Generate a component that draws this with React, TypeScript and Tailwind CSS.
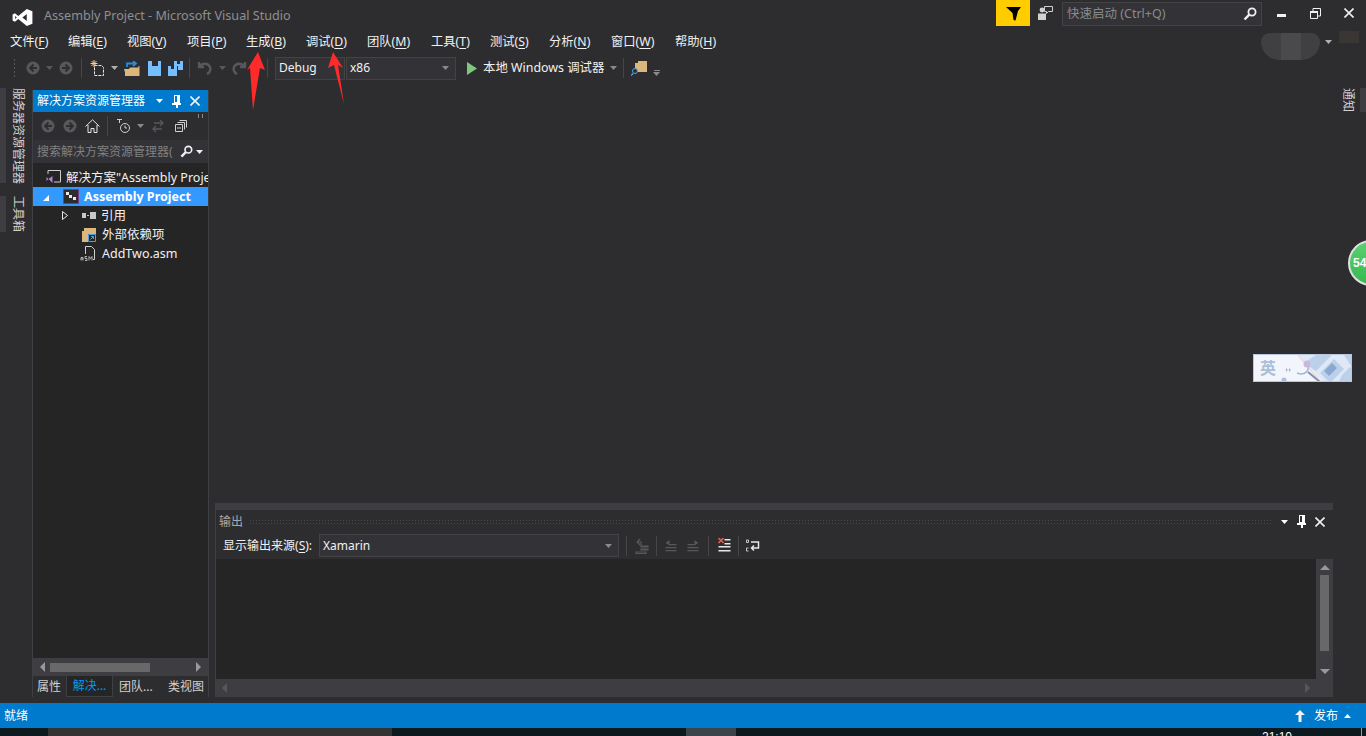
import { ReactNode } from "react";

const font = { cjk: "font-['Noto_Sans','Noto_Sans_CJK_SC',sans-serif]" };

const menus = [
  ["文件", "F", "w-[58px]"],
  ["编辑", "E", "w-[59px]"],
  ["视图", "V", "w-[60px]"],
  ["项目", "P", "w-[59px]"],
  ["生成", "B", "w-[60px]"],
  ["调试", "D", "w-[61px]"],
  ["团队", "M", "w-[64px]"],
  ["工具", "T", "w-[59px]"],
  ["测试", "S", "w-[59px]"],
  ["分析", "N", "w-[62px]"],
  ["窗口", "W", "w-[64px]"],
  ["帮助", "H", "w-[50px]"],
];

function Caret({ className = "" }: { className?: string }) {
  return (
    <svg width="7" height="4" viewBox="0 0 7 4" className={`shrink-0 ${className}`}>
      <path d="M0 0h7L3.5 4z" fill="currentColor" />
    </svg>
  );
}

function Sep({ className = "" }: { className?: string }) {
  return <div className={`w-px h-[20px] bg-[#46464a] shrink-0 ${className}`} />;
}

function CircleArrow({ dir }: { dir: "l" | "r" }) {
  return (
    <svg width="14" height="14" viewBox="0 0 14 14" className="text-[#58585c]">
      <circle cx="7" cy="7" r="6.5" fill="currentColor" />
      <path d={dir === "l" ? "M7.5 3.5 4 7l3.5 3.5M4.5 7H11" : "M6.5 3.5 10 7l-3.5 3.5M9.5 7H3"} stroke="#2d2d30" strokeWidth="1.8" fill="none" />
    </svg>
  );
}

function Pin({ color = "#fff" }: { color?: string }) {
  return (
    <svg width="9" height="13" viewBox="0 0 9 13">
      <path d="M2 .5h5v7H2zM0 8h9v1H0zM4 9h1v4H4zM5 1h1v6H5z" fill="none" stroke={color} strokeWidth="1" shapeRendering="crispEdges" />
    </svg>
  );
}

function CloseX({ size = 10 }: { size?: number }) {
  return (
    <svg width={size} height={size} viewBox="0 0 10 10">
      <path d="M.5.5l9 9M9.5.5l-9 9" stroke="#f1f1f1" strokeWidth="1.6" />
    </svg>
  );
}

function Underlined({ label, k }: { label: string; k: string }) {
  return (
    <>
      {label}(<span className="underline underline-offset-2">{k}</span>)
    </>
  );
}

function TitleBar() {
  return (
    <div className="h-[30px] flex items-start shrink-0">
      <svg width="21" height="17" viewBox="0 0 21 18" className="ml-[12px] mt-[9px]">
        <path d="M15 0l6 2.5v13L15 18 6 10.5 2.5 13.5 0 12.3V5.7l2.5-1.2L6 7.5zM15 5.2 10.4 9l4.6 3.8zM2.700 7.3v3.4L4.500 9z" fill="#fff" fillRule="evenodd" />
      </svg>
      <span className={`ml-[11px] mt-[7px] text-[12.6px] leading-[18px] text-[#8f8f91] ${font.cjk}`}>Assembly Project - Microsoft Visual Studio</span>
      <div className="ml-auto flex items-start">
        <div className="w-[34px] h-[26px] bg-[#ffcc00] flex items-center justify-center">
          <svg width="15" height="15" viewBox="0 0 15 15">
            <path d="M0 1h15l-3 4-2.500 9.500L7.500 14 6.500 7z" fill="#000" />
          </svg>
        </div>
        <svg width="15" height="14" viewBox="0 0 15 14" className="ml-[8px] mt-[6px]">
          <circle cx="4" cy="4" r="2.4" fill="#d0d0d0" />
          <path d="M0 7.5h8V14H0z" fill="#d0d0d0" />
          <path d="M6.5.5h8v5h-4l-2 2v-2h-2z" fill="none" stroke="#d0d0d0" />
        </svg>
        <div className="ml-[9px] mt-[2px] w-[200px] h-[24px] bg-[#333337] border border-[#434346] flex items-center pl-[4px] pr-[4px]">
          <span className={`pt-px text-[12.500px] text-[#8a8a8c] ${font.cjk}`}>快速启动 (Ctrl+Q)</span>
          <svg width="14" height="14" viewBox="0 0 14 14" className="ml-auto">
            <circle cx="9" cy="5" r="3.6" fill="none" stroke="#f1f1f1" strokeWidth="1.8" />
            <path d="M6.3 7.7 1.5 12.5" stroke="#f1f1f1" strokeWidth="2.4" />
          </svg>
        </div>
        <div className="w-[34px] ml-[2px] h-[26px] flex items-center justify-center">
          <div className="w-[9px] h-[3px] bg-[#f1f1f1] mt-[4px]" />
        </div>
        <div className="w-[34px] h-[26px] flex items-center justify-center">
          <svg width="11" height="11" viewBox="0 0 11 11">
            <path d="M.5 3.5h7v7h-7zM3 3V.5h7.5V8H8" fill="none" stroke="#f1f1f1" />
            <path d="M0 3h8v2H0z" fill="#f1f1f1" />
          </svg>
        </div>
        <div className="w-[34px] h-[26px] flex items-center justify-center">
          <CloseX />
        </div>
      </div>
    </div>
  );
}

function MenuBar() {
  return (
    <div className="h-[24px] flex items-center shrink-0 relative">
      <div className="flex pl-[10px]">
        {menus.map(([label, k, width]) => (
          <span key={k} className={`${width} whitespace-nowrap text-[12.300px] leading-[22px] text-[#f1f1f1] ${font.cjk}`}>
            <Underlined label={label} k={k} />
          </span>
        ))}
      </div>
      <div className="absolute left-[1261px] top-[3px] w-[59px] h-[27px] rounded-b-[30px] rounded-t-[14px] bg-[#404042] flex justify-center">
        <div className="w-[20px] h-full bg-[#4a4a4c]" />
      </div>
      <Caret className="absolute left-[1325px] top-[10px] text-[#b0b0b0]" />
      <div className="absolute left-[1339px] top-[1px] w-[20px] h-[12px] bg-[#3a3634]" />
    </div>
  );
}

function DropBox({ label, width, caret = true }: { label: string; width: string; caret?: boolean }) {
  return (
    <div className={`${width} h-[23px] bg-[#333337] border border-[#434346] flex items-center pl-[3px] pr-[6px]`}>
      <span className={`text-[12px] text-[#f1f1f1] ${font.cjk}`}>{label}</span>
      {caret && <Caret className="ml-auto text-[#8a8a8c]" />}
    </div>
  );
}

function Toolbar() {
  return (
    <div className="h-[28px] flex items-center shrink-0">
      <div className="ml-[13px] w-[3px] h-[20px] [background-image:radial-gradient(#55555a_1px,transparent_1px)] [background-size:3px_4px]" />
      <div className="ml-[10px]">
        <CircleArrow dir="l" />
      </div>
      <Caret className="ml-[6px] text-[#58585c]" />
      <div className="ml-[6px]">
        <CircleArrow dir="r" />
      </div>
      <Sep className="ml-[8px]" />
      <svg width="15" height="16" viewBox="0 0 15 16" className="ml-[8px]">
        <path d="M4.5 5.500h7l2 2v8h-9z" fill="none" stroke="#e8e8e8" strokeDasharray="3 1" />
        <path d="M4 0v7M.5 3.500h7M1.500 1l5 5M6.500 1l-5 5" stroke="#f0d090" />
      </svg>
      <Caret className="ml-[6px] text-[#b0b0b0]" />
      <svg width="16" height="15" viewBox="0 0 16 15" className="ml-[6px]">
        <path d="M0 8h5l1-1.500h9V15H2z" fill="#dcb67a" />
        <path d="M0 8h1v7h1V8zM14.500 5h1v10h-1z" fill="#dcb67a" />
        <path d="M3 6V2.500h8M9 0l3 2.500-3 2.500" stroke="#1f8fe0" strokeWidth="1.8" fill="none" />
      </svg>
      <svg width="13" height="15" viewBox="0 0 13 15" className="ml-[8px]">
        <path d="M0 0h13v15H0z" fill="#75beff" />
        <path d="M4 0h6v5H4z" fill="#2d2d30" />
      </svg>
      <svg width="15" height="15" viewBox="0 0 15 15" className="ml-[7px]">
        <path d="M6 0h9v9h-5V5H6z" fill="#75beff" />
        <path d="M9 0h3v3H9z" fill="#2d2d30" />
        <path d="M0 5h9v10H0z" fill="#75beff" />
        <path d="M3 5h3v3H3z" fill="#2d2d30" />
      </svg>
      <Sep className="ml-[6px]" />
      <svg width="15" height="14" viewBox="0 0 15 14" className="ml-[7px]">
        <path d="M2 1v5h5M2.5 5.5C5 2 11 1.500 13 6c1 3-.5 6-3 7" fill="none" stroke="#58585c" strokeWidth="2.4" />
      </svg>
      <Caret className="ml-[7px] text-[#58585c]" />
      <svg width="15" height="14" viewBox="0 0 15 14" className="ml-[6px]">
        <path d="M13 1v5H8M12.500 5.500C10 2 4 1.500 2 6c-1 3 .5 6 3 7" fill="none" stroke="#58585c" strokeWidth="2.4" />
      </svg>
      <Sep className="ml-[20px]" />
      <div className="ml-[7px]">
        <DropBox label="Debug" width="w-[70px]" caret={false} />
      </div>
      <div className="ml-px">
        <DropBox label="x86" width="w-[110px]" />
      </div>
      <svg width="10" height="13" viewBox="0 0 10 13" className="ml-[11px]">
        <path d="M0 0l10 6.500L0 13z" fill="#7fc77f" />
      </svg>
      <span className={`ml-[6px] whitespace-nowrap text-[12.400px] text-[#f1f1f1] ${font.cjk}`}>本地 Windows 调试器</span>
      <Caret className="ml-[6px] text-[#8a8a8c]" />
      <Sep className="ml-[6px]" />
      <svg width="16" height="15" viewBox="0 0 16 15" className="ml-[7px]">
        <path d="M4 2h3V0h9v11H4z" fill="#dcb67a" />
        <circle cx="4" cy="10" r="2.5" fill="#2d2d30" stroke="#4aa3e8" />
        <path d="M2 12.500 0 14.500" stroke="#4aa3e8" strokeWidth="1.500" />
      </svg>
      <div className="ml-[6px] mt-[10px] flex flex-col items-center gap-[1px] text-[#8a8a8c]">
        <div className="w-[6px] h-px bg-[#8a8a8c]" />
        <Caret />
      </div>
    </div>
  );
}

function TreeRow({ pad, icon, text, selected, arrow, gap = "ml-[5px]" }: { pad: string; icon: ReactNode; text: string; selected?: boolean; arrow?: ReactNode; gap?: string }) {
  return (
    <div className={`h-[19px] flex items-center relative ${pad} ${selected ? "bg-[#3399ff]" : ""}`}>
      {arrow}
      <div className="shrink-0 flex">{icon}</div>
      <span className={`${gap} pt-[2px] whitespace-nowrap text-[12.500px] ${selected ? "font-bold text-white" : "text-[#f1f1f1]"} ${font.cjk}`}>{text}</span>
    </div>
  );
}

function SolutionExplorer() {
  return (
    <div className="mt-[8px] mb-[6px] w-[177px] flex flex-col border-x border-[#3f3f46] shrink-0">
      <div className="h-[22px] bg-[#007acc] flex items-center pl-[4px] shrink-0">
        <span className={`text-[12px] text-white ${font.cjk}`}>解决方案资源管理器</span>
        <Caret className="ml-auto text-white" />
        <div className="ml-[9px]">
          <Pin />
        </div>
        <div className="ml-[9px] mr-[8px]">
          <CloseX />
        </div>
      </div>
      <div className="h-[28px] bg-[#2d2d30] flex items-center pl-[8px] relative shrink-0">
        <CircleArrow dir="l" />
        <div className="ml-[8px]">
          <CircleArrow dir="r" />
        </div>
        <svg width="15" height="14" viewBox="0 0 15 14" className="ml-[8px]">
          <path d="M.5 7.500 7.500.8l7 6.700M3 6v7.500h3v-4h3v4h3V6" fill="none" stroke="#e8e8e8" />
        </svg>
        <Sep className="ml-[7px]" />
        <svg width="14" height="14" viewBox="0 0 14 14" className="ml-[9px]">
          <circle cx="8" cy="9" r="4.500" fill="none" stroke="#d0d0d0" />
          <path d="M8 6.500V9h2M0 .5h5M2.500 .5V4" fill="none" stroke="#d0d0d0" />
        </svg>
        <Caret className="ml-[6px] text-[#8a8a8c]" />
        <svg width="12" height="12" viewBox="0 0 12 12" className="ml-[8px]">
          <path d="M2 3h9M8 0l3 3-3 3M10 9H1M4 6 1 9l3 3" fill="none" stroke="#58585c" strokeWidth="1.300" />
        </svg>
        <svg width="12" height="12" viewBox="0 0 12 12" className="ml-[11px]">
          <path d="M.5 4.500h7v7h-7zM2.500 2.500h7v7M4.500.5h7v7M2 8h4" fill="none" stroke="#d0d0d0" />
        </svg>
        <div className="absolute right-[5px] top-[2px] w-[5px] h-[4px] border-x border-[#8a8a8c]" />
      </div>
      <div className="h-[23px] bg-[#333337] flex items-center pl-[4px] shrink-0">
        <span className={`w-[137px] overflow-hidden whitespace-nowrap text-[12px] text-[#808082] ${font.cjk}`}>搜索解决方案资源管理器(</span>
        <svg width="13" height="13" viewBox="0 0 14 14" className="ml-[6px]">
          <circle cx="9" cy="5" r="3.600" fill="none" stroke="#f1f1f1" strokeWidth="1.800" />
          <path d="M6.300 7.700 1.500 12.500" stroke="#f1f1f1" strokeWidth="2.400" />
        </svg>
        <Caret className="ml-[3px] text-[#f1f1f1]" />
      </div>
      <div className="flex-1 bg-[#252526] pt-[5px] overflow-hidden">
        <TreeRow
          pad="pl-[13px]"
          text={'解决方案"Assembly Project"'}
          icon={
            <svg width="15" height="15" viewBox="0 0 15 15">
              <path d="M2 4V.5h12.500V12H8" fill="none" stroke="#d0d0d0" />
              <path d="M.5 7l2 2-2 2zM2.500 9l4-3v7z" fill="#b180d7" />
            </svg>
          }
        />
        <TreeRow
          pad="pl-[30px]"
          selected
          text="Assembly Project"
          arrow={<div className="absolute left-[10px] top-[8px] w-0 h-0 border-l-[6px] border-l-transparent border-b-[6px] border-b-white" />}
          icon={
            <svg width="16" height="15" viewBox="0 0 16 15">
              <path d="M.5.5h15v14H.5z" fill="#2d2d30" stroke="#7a3a8a" />
              <path d="M3 3h3v3H3zM6 6h3v3H6zM10 8h3v3h-3z" fill="#e8e8e8" />
            </svg>
          }
        />
        <TreeRow
          pad="pl-[49px]"
          gap="ml-[5px]"
          text="引用"
          arrow={
            <svg width="6" height="9" viewBox="0 0 6 9" className="absolute left-[29px] top-[5px]">
              <path d="M.5.5 5.500 4.500.5 8.500z" fill="none" stroke="#e8e8e8" />
            </svg>
          }
          icon={
            <svg width="14" height="7" viewBox="0 0 14 7">
              <path d="M0 1h4v5H0zM5 3h2v1H5z" fill="#c8c8c8" />
              <path d="M8 0h6v7H8z" fill="#c8c8c8" />
            </svg>
          }
        />
        <TreeRow
          pad="pl-[49px]"
          gap="ml-[6px]"
          text="外部依赖项"
          icon={
            <svg width="14" height="14" viewBox="0 0 14 14">
              <path d="M0 3h2V0h12v6H6v8H0z" fill="#dcb67a" />
              <path d="M6.500 6.500h7v7h-7z" fill="#252526" stroke="#4aa3e8" />
              <path d="M8.500 11.500l3-3M9 8.500h2.500V11" stroke="#4aa3e8" fill="none" />
            </svg>
          }
        />
        <TreeRow
          pad="pl-[47px]"
          gap="ml-[6px]"
          text="AddTwo.asm"
          icon={
            <svg width="16" height="15" viewBox="0 0 16 15">
              <path d="M5.500 8V.5h6l3 3v10H13" fill="none" stroke="#d0d0d0" />
              <path d="M0 10h12v5H0z" fill="#252526" />
              <path d="M1 14.500v-3h2v3M1 13h2M7 10.500H5v2h2v2H5M9 14.500v-4l1.500 2 1.500-2v4" fill="none" stroke="#d0d0d0" strokeWidth=".8" />
            </svg>
          }
        />
      </div>
      <div className="h-[18px] bg-[#3e3e42] flex items-center px-[7px] shrink-0">
        <div className="w-0 h-0 border-y-[5px] border-y-transparent border-r-[5px] border-r-[#999]" />
        <div className="ml-[5px] w-[100px] h-[9px] bg-[#686868]" />
        <div className="ml-auto w-0 h-0 border-y-[5px] border-y-transparent border-l-[5px] border-l-[#999]" />
      </div>
      <div className="h-[21px] bg-[#2d2d30] flex items-center shrink-0">
        <span className={`ml-[4px] text-[12px] text-[#d0d0d0] ${font.cjk}`}>属性</span>
        <div className="ml-[5px] w-[47px] h-[21px] bg-[#252526] border border-[#3f3f46] border-t-0 flex items-center justify-center">
          <span className={`text-[12px] text-[#0097fb] ${font.cjk}`}>解决...</span>
        </div>
        <span className={`ml-[6px] text-[12px] text-[#d0d0d0] ${font.cjk}`}>团队...</span>
        <span className={`ml-auto mr-[4px] text-[12px] text-[#d0d0d0] ${font.cjk}`}>类视图</span>
      </div>
    </div>
  );
}

function OutputPanel() {
  return (
    <div className="h-[194px] ml-[6px] flex flex-col border-l border-[#3f3f46] shrink-0">
      <div className="h-[7px] bg-[#3e3e42] shrink-0" />
      <div className="h-[23px] flex items-center pl-[3px] shrink-0">
        <span className={`text-[12px] text-[#a8a8aa] ${font.cjk}`}>输出</span>
        <div className="ml-[6px] flex-1 h-[5px] [background-image:radial-gradient(#48484c_1px,transparent_1px)] [background-size:3px_3px]" />
        <Caret className="ml-[10px] text-white" />
        <div className="ml-[9px]">
          <Pin />
        </div>
        <div className="ml-[9px] mr-[8px]">
          <CloseX />
        </div>
      </div>
      <div className="h-[25px] flex items-center pl-[7px] shrink-0">
        <span className={`text-[12px] text-[#f1f1f1] ${font.cjk}`}>
          <Underlined label="显示输出来源" k="S" />:
        </span>
        <div className="ml-[7px]">
          <DropBox label="Xamarin" width="w-[300px]" />
        </div>
        <Sep className="ml-[7px]" />
        <svg width="14" height="16" viewBox="0 0 14 16" className="ml-[8px]">
          <path d="M1 14h10v1.500H1zM6 11h7v1H6zM6 8h7v1H6zM5 1 2 4l3 3M2.500 4H6v4" fill="none" stroke="#58585c" strokeWidth="1.200" />
        </svg>
        <Sep className="ml-[7px]" />
        <svg width="12" height="12" viewBox="0 0 11 12" className="ml-[8px]">
          <path d="M3 4h8v1.200H3zM0 7h11v1.200H0zM0 10h11v1.200H0z" fill="#58585c" />
          <path d="M4 0 0 3l4 2z" fill="#58585c" />
        </svg>
        <svg width="12" height="12" viewBox="0 0 11 12" className="ml-[10px]">
          <path d="M0 4h8v1.200H0zM0 7h11v1.200H0zM0 10h11v1.200H0z" fill="#58585c" />
          <path d="M7 0l4 3-4 2z" fill="#58585c" />
        </svg>
        <Sep className="ml-[9px]" />
        <svg width="14" height="15" viewBox="0 0 13 15" className="ml-[8px]">
          <path d="M1 0l5 5M6 0 1 5" stroke="#e0604c" strokeWidth="1.600" />
          <path d="M7 1h6v1.500H7zM7 5h6v1.500H7zM1 8h12v1.500H1zM1 12h12v1.500H1z" fill="#e8e8e8" />
        </svg>
        <Sep className="ml-[7px]" />
        <svg width="15" height="14" viewBox="0 0 15 14" className="ml-[7px]">
          <path d="M5 3h7.500v6H6M8 6.500 5.500 9 8 11.500" fill="none" stroke="#e8e8e8" strokeWidth="1.500" />
          <path d="M.5 1h2v2.500h-2zM.5 9h2M.5 9v3h2" fill="none" stroke="#e8e8e8" strokeWidth=".8" />
        </svg>
      </div>
      <div className="flex-1 flex min-h-0 mt-px">
        <div className="flex-1 bg-[#252526]" />
        <div className="w-[17px] bg-[#3e3e42] flex flex-col items-center pt-[6px] pb-[5px]">
          <div className="w-0 h-0 border-x-[5px] border-x-transparent border-b-[5px] border-b-[#999]" />
          <div className="mt-[5px] w-[9px] h-[76px] bg-[#686868]" />
          <div className="mt-auto w-0 h-0 border-x-[5px] border-x-transparent border-t-[5px] border-t-[#999]" />
        </div>
      </div>
      <div className="h-[18px] bg-[#3e3e42] flex items-center pl-[6px] pr-[23px] shrink-0">
        <div className="w-0 h-0 border-y-[5px] border-y-transparent border-r-[5px] border-r-[#58585c]" />
        <div className="ml-auto w-0 h-0 border-y-[5px] border-y-transparent border-l-[5px] border-l-[#58585c]" />
      </div>
    </div>
  );
}

function VerticalTab({ text, height }: { text: string; height: string }) {
  return (
    <div className={`flex ${height}`}>
      <div className="w-[6px] h-full bg-[#3e3e42]" />
      <span className={`ml-[5px] [writing-mode:vertical-rl] [text-orientation:sideways] text-[12px] leading-[14px] text-[#d0d0d0] whitespace-nowrap ${font.cjk}`}>{text}</span>
    </div>
  );
}

export default function App() {
  return (
    <div className="w-[1366px] h-[736px] bg-[#2d2d30] flex flex-col overflow-hidden relative">
      <TitleBar />
      <MenuBar />
      <Toolbar />
      <div className="flex-1 flex min-h-0">
        <div className="w-[32px] shrink-0 pt-[6px] flex flex-col gap-[13px]">
          <VerticalTab text="服务器资源管理器" height="h-[95px]" />
          <VerticalTab text="工具箱" height="h-[36px]" />
        </div>
        <SolutionExplorer />
        <div className="flex-1 flex flex-col justify-end pb-[6px] min-w-0">
          <OutputPanel />
        </div>
        <div className="w-[33px] shrink-0 pt-[6px] flex justify-end">
          <span className={`[writing-mode:vertical-rl] [text-orientation:sideways] text-[12px] leading-[14px] text-[#d0d0d0] h-[24px] ${font.cjk}`}>通知</span>
          <div className="ml-[5px] w-[6px] h-[24px] bg-[#3e3e42]" />
        </div>
      </div>
      <div className="h-[25px] bg-[#007acc] flex items-center pl-[4px] shrink-0">
        <span className={`text-[12px] text-white ${font.cjk}`}>就绪</span>
        <svg width="10" height="12" viewBox="0 0 10 12" className="ml-auto">
          <path d="M5 0l5 5H6.500v7h-3V5H0z" fill="#f1f1f1" />
        </svg>
        <span className={`ml-[9px] text-[12px] text-white ${font.cjk}`}>发布</span>
        <Caret className="ml-[6px] mr-[15px] rotate-180 text-white" />
      </div>
      <div className="h-[8px] bg-[#0c1a20] flex shrink-0 overflow-hidden">
        <div className="w-[48px]" />
        <div className="w-[344px] bg-[#333333]" />
        <div className="w-[294px]" />
        <div className="w-[50px] bg-[#3a444a]" />
        <span className="ml-[526px] pt-[2px] h-[8px] text-[12px] leading-[14px] text-white font-['Liberation_Sans',sans-serif]">21:10</span>
        <div className="ml-auto mr-[4px] w-px bg-[#9a9a9a]" />
      </div>

      {/* red annotation arrows */}
      <svg width="110" height="62" viewBox="0 0 110 62" className="absolute left-[240px] top-[50px]">
        <path d="M18 2l7 18-5-2-7 42-3-42-3 2z" fill="#ff2a2a" />
        <path d="M93 2l10 16-5-3 6 39-10-39-6 3z" fill="#ff2a2a" />
      </svg>

      {/* floating desktop widgets */}
      <div className="absolute left-[1348px] top-[240px] w-[46px] h-[46px] rounded-full bg-gradient-to-b from-[#58d070] to-[#38b850] border-2 border-[#e0e0e0] flex items-center pl-[3px]">
        <span className="text-[12px] font-bold text-white font-['Liberation_Sans',sans-serif]">54</span>
      </div>
      <div className="absolute left-[1253px] top-[354px] w-[99px] h-[28px] bg-[#f2f5fb] border border-[#b8c8e0] overflow-hidden flex items-center pl-[6px]">
        <svg width="99" height="28" viewBox="0 0 99 28" className="absolute left-0 top-0">
          <path d="M45 0h54v28H70z" fill="#dfe8f6" />
          <path d="M62 0h16L62 16 50 8zM80 4l10 10-14 14-10-10zM90 0h9v14zM88 20l8-8 3 3v13H84z" fill="#bcd0ea" />
          <path d="M78 8l5 5-8 8-5-5z" fill="#8aa8d0" />
          <path d="M44 0l22 26" stroke="#f0d8d0" strokeWidth="1.500" />
          <path d="M54 17l12 10" stroke="#8090b0" strokeWidth="2" />
          <path d="M54 8c2 8-3 13-11 10" fill="none" stroke="#9fb8dc" strokeWidth="1.600" />
          <circle cx="53" cy="9" r="3.500" fill="#c8b8dc" />
          <circle cx="30" cy="25" r="2.500" fill="#b0bce0" />
        </svg>
        <span className={`relative font-bold text-[16px] leading-none text-[#a9bfd8] ${font.cjk}`}>英</span>
        <span className="relative ml-[9px] -mt-[3px] text-[11px] text-[#6f8ab0] font-['Liberation_Sans',sans-serif]">,,</span>
      </div>
    </div>
  );
}
